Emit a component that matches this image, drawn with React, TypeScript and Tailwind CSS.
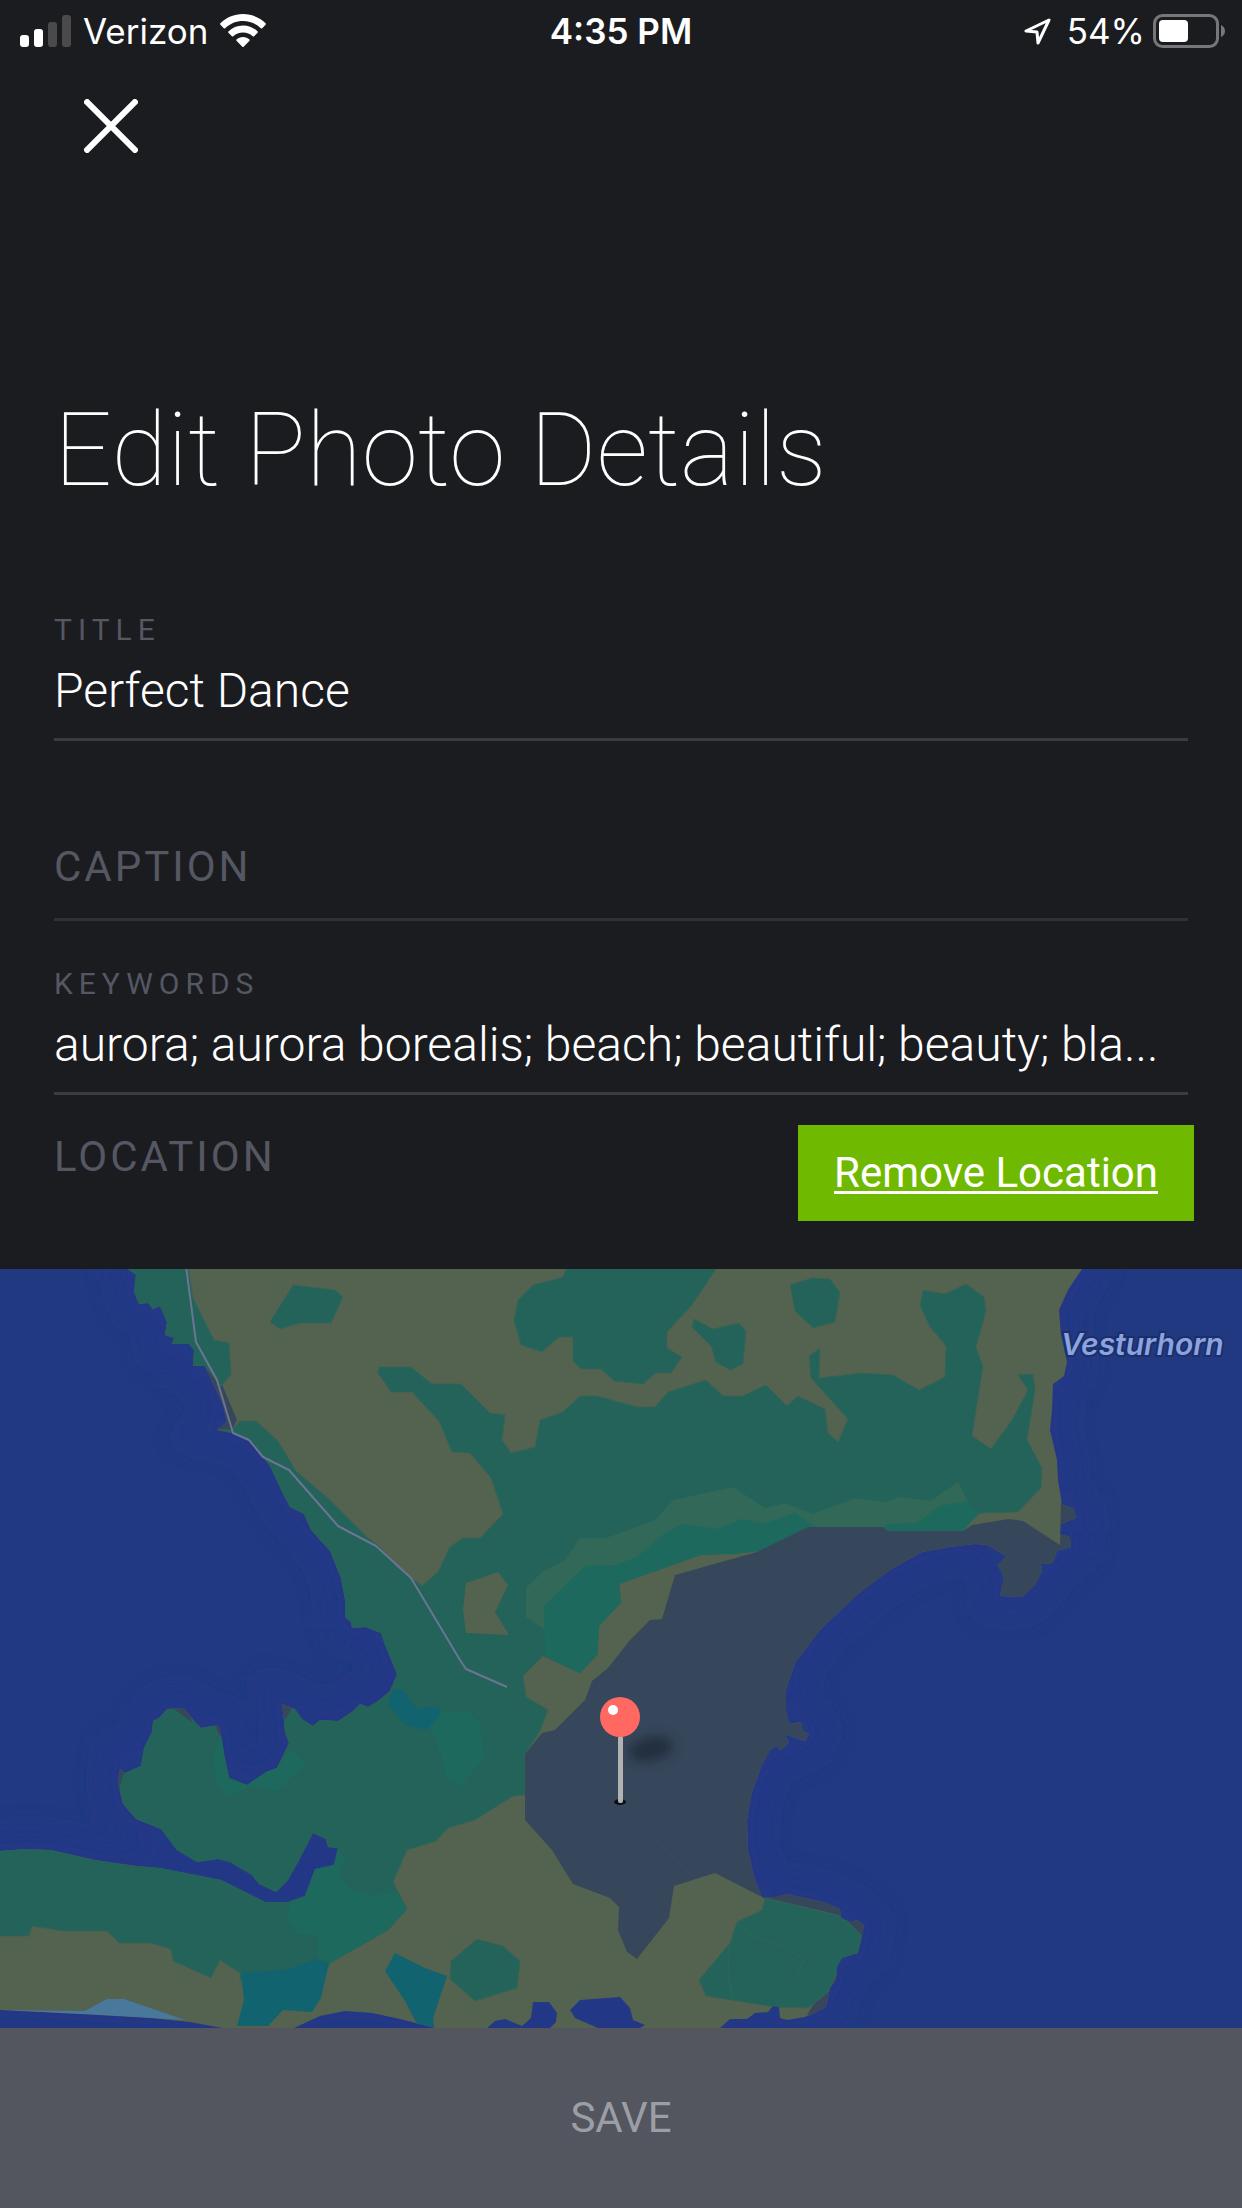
import React from "react";

const LAND =
  "M128 1269L136 1275L134 1292L139 1304L148 1303L153 1309L160 1306L167 1322L165 1335L174 1338L172 1344L189 1344L194 1350L193 1366L205 1366L212 1382L222 1402L227 1422L217 1430L232 1433L249 1440L263 1457L270 1466L283 1494L290 1507L304 1514L311 1530L330 1551L341 1578L345 1600L345 1617L351 1622L352 1628L365 1627L381 1633L385 1645L397 1674L390 1691L378 1701L368 1707L360 1704L352 1712L338 1721L320 1720L313 1726L302 1719L295 1709L282 1704L284 1721L285 1732L289 1743L277 1768L266 1772L247 1785L229 1778L224 1754L221 1734L218 1725L201 1728L195 1722L184 1708L167 1709L159 1718L153 1721L152 1732L144 1748L141 1766L125 1773L120 1769L118 1783L123 1804L136 1819L161 1829L177 1850L197 1862L218 1859L230 1862L252 1875L259 1884L276 1892L288 1880L298 1862L313 1833L326 1839L328 1847L338 1848L334 1865L315 1869L305 1896L288 1902L265 1902L221 1880L160 1868L136 1866L95 1860L51 1850L25 1849L0 1851L-60 1851L-60 2010L0 2010L80 2014L150 2018L190 2022L222 2028L222 2060L294 2060L294 2028L320 2016L345 2011L372 2013L400 2019L435 2028L435 2060L487 2060L487 2028L495 2021L505 2019L522 2026L531 2018L533 2002L549 2002L557 2013L556 2022L550 2028L550 2060L598 2060L598 2028L575 2018L570 2010L580 2000L620 1997L630 2008L633 2020L645 2025L640 2028L640 2060L720 2060L720 2028L730 2019L747 2019L755 2013L768 2012L773 2006L779 2007L780 2018L787 2020L805 2017L815 2013L826 2007L830 1988L836 1980L837 1967L842 1958L858 1953L862 1935L864 1925L857 1920L850 1922L841 1918L840 1909L824 1902L787 1894L776 1897L762 1897L755 1880L748 1850L747 1820L752 1792L762 1765L770 1750L776 1746L781 1750L789 1743L785 1734L795 1738L805 1741L809 1734L803 1731L801 1722L789 1724L786 1710L786 1690L795 1663L820 1630L858 1594L890 1570L922 1552L950 1547L975 1544L987 1545L1006 1556L998 1565L1004 1578L1000 1596L1022 1597L1035 1585L1042 1571L1041 1564L1053 1563L1057 1551L1071 1547L1070 1537L1060 1534L1061 1524L1076 1518L1074 1509L1062 1504L1058 1480L1057 1460L1050 1430L1052 1410L1053 1384L1064 1376L1067 1362L1061 1335L1059 1310L1068 1290L1082 1269L1082 1230L128 1230Z";

const SLIVERS = [
  "205,1366 221,1382 237,1420 230,1434 205,1436",
  "762,1897 787,1885 870,1900 880,2010 807,2015 840,1960",
  "165,1702 186,1700 192,1722 178,1712",
  "212,1720 224,1722 222,1740",
  "278,1700 292,1708 285,1720",
  "112,1765 124,1772 119,1790",
];

const FOREST = [
  "120,1260 187,1260 193,1298 214,1340 229,1343 231,1375 221,1386 205,1366 150,1366",
  "232,1430 240,1421 256,1421 278,1441 296,1471 330,1500 368,1538 380,1547 398,1568 422,1586 438,1572 450,1547 463,1538 480,1538 503,1514 491,1478 470,1453 452,1452 439,1421 412,1392 391,1392 378,1373 379,1367 411,1367 432,1384 461,1384 490,1413 505,1415 502,1440 511,1453 535,1447 540,1420 563,1412 580,1396 597,1396 637,1407 655,1407 668,1392 706,1380 723,1396 743,1396 766,1385 787,1406 798,1396 825,1409 828,1433 838,1442 848,1419 811,1378 809,1356 820,1348 819,1378 862,1373 893,1375 919,1390 945,1377 946,1346 930,1327 920,1305 923,1290 945,1294 966,1284 984,1297 986,1311 976,1347 983,1367 972,1436 991,1449 1012,1420 1028,1390 1018,1375 1033,1374 1035,1390 1027,1440 1042,1468 1041,1488 1018,1512 980,1513 960,1530 808,1527 760,1551 700,1555 619,1584 621,1603 599,1625 597,1655 580,1673 543,1656 523,1676 526,1697 548,1710 539,1733 525,1754 525,1795 513,1796 475,1820 448,1828 436,1841 407,1850 393,1882 407,1909 388,1930 330,1963 322,1980 240,1980 240,1973 220,1960 211,1978 173,1961 171,1949 150,1943 119,1943 107,1931 63,1931 32,1926 29,1936 -60,1936 -60,1430",
  "293,1285 335,1290 343,1297 331,1323 300,1323 280,1329 270,1322",
  "570,1260 563,1277 533,1285 518,1300 514,1320 521,1345 542,1352 559,1337 573,1337 573,1361 581,1369 601,1369 614,1381 643,1384 656,1373 671,1373 682,1357 667,1348 667,1332 692,1305 722,1260",
  "694,1319 713,1329 739,1323 746,1331 743,1364 730,1370 716,1362 711,1346 692,1327",
  "790,1285 812,1278 830,1279 840,1292 835,1322 813,1328 795,1311",
  "765,1898 837,1915 848,1922 861,1935 860,1955 843,1960 828,1992 808,2008 775,2007 706,1996 699,1980 730,1943 737,1922 762,1910",
  "477,1939 503,1946 520,1961 517,1988 475,2001 450,1979 451,1961",
];

const HEATH = [
  "526,1588 542,1572 565,1560 580,1538 606,1538 655,1520 673,1500 733,1487 765,1508 785,1503 813,1514 855,1498 885,1502 900,1497 930,1501 958,1482 968,1501 940,1510 920,1527 815,1527 700,1545 600,1590 544,1629 526,1617",
];

const GROVES = [
  "544,1606 585,1566 615,1565 637,1557 665,1533 683,1524 718,1529 742,1519 763,1524 795,1513 815,1527 805,1530 760,1551 735,1554 700,1555 619,1584 621,1603 599,1626 597,1655 580,1673 545,1656",
  "885,1524 917,1523 940,1506 968,1501 979,1513 963,1531 888,1531",
  "430,1725 441,1712 470,1712 480,1724 484,1758 460,1787 446,1778 442,1758",
  "213,1757 221,1735 229,1778 247,1785 266,1772 277,1768 289,1750 307,1763 278,1791 250,1785 230,1797 216,1783",
  "330,1846 338,1848 346,1860 338,1875 350,1888 370,1896 397,1892 407,1909 388,1930 330,1963 318,1956 318,1935 297,1934 287,1920 290,1902 305,1896 315,1869 334,1865",
];

const SAND = [
  "757,1552 808,1527 883,1527 888,1531 963,1531 972,1525 1009,1519 1023,1521 1060,1545 1061,1500 1090,1500 1090,1610 900,1700 830,1896 762,1897 715,1873 674,1886 669,1918 637,1959 627,1952 618,1930 619,1907 610,1898 573,1884 552,1850 525,1820 525,1754 542,1733 555,1730 585,1700 592,1681 608,1668 630,1640 650,1620 662,1619 675,1575",
];

const LAKES = [
  "241,1973 290,1969 315,1959 329,1963 321,1998 312,2012 283,2010 268,2026 237,2026 244,2000",
  "395,1953 425,1968 447,1976 433,2018 436,2040 418,2026 405,2001 385,1971",
  "388,1705 392,1690 402,1689 417,1709 437,1706 441,1713 427,1730 405,1725",
];

const MEADOWS = ["466,1583 498,1572 508,1585 495,1612 509,1635 466,1633 463,1610"];

function Shapes({ list, className }: { list: string[]; className: string }) {
  return (
    <g className={className} strokeWidth={1}>
      {list.map((points) => (
        <polygon key={points} points={points} />
      ))}
    </g>
  );
}

function LocationMap() {
  return (
    <svg
      className="block min-h-[759px] w-full flex-1 bg-[#213981]"
      viewBox="0 1269 1242 759"
      preserveAspectRatio="xMidYMid slice"
      role="img"
      aria-label="Map of Vesturhorn with a pin"
    >
      <defs>
        <clipPath id="land">
          <path d={LAND} />
        </clipPath>
        <filter id="glow" x="-10%" y="-10%" width="120%" height="120%">
          <feGaussianBlur stdDeviation="12" />
        </filter>
        <filter id="shade" x="-50%" y="-100%" width="200%" height="300%">
          <feGaussianBlur stdDeviation="6" />
        </filter>
      </defs>
      <path d={LAND} className="fill-none stroke-[#213886]" strokeWidth="40" filter="url(#glow)" />
      <path d={LAND} className="fill-[#54634f]" />
      <g clipPath="url(#land)">
        <Shapes list={SLIVERS} className="fill-[#37475b]" />
        <Shapes list={FOREST} className="fill-[#236359] stroke-[#3a6357]" />
        <Shapes list={SLIVERS.slice(2)} className="fill-[#37475b]" />
        <Shapes list={HEATH} className="fill-[#326857]" />
        <Shapes list={GROVES} className="fill-[#1d695e]" />
        <Shapes list={SAND} className="fill-[#37475b]" />
        <Shapes list={LAKES} className="fill-[#11636f]" />
        <Shapes list={MEADOWS} className="fill-[#54634f]" />
        <polygon points="0,2010 85,2011 107,1999 124,1999 185,2020 100,2015" className="fill-[#4a789d]" />
      </g>
      <g className="fill-none stroke-[#3b4c5f]" strokeWidth="1">
        <path d="M553 1734L692 1876" />
        <path d="M738 1923L752 1937L782 1945L804 1960L796 1978L804 1984M730 1943L728 1975L733 2000" className="stroke-[#2c675c]" />
      </g>
      <path
        d="M186 1266L196 1342L217 1380L233 1433L249 1440L263 1457L289 1470L338 1526L376 1546L411 1578L460 1660L466 1669L507 1687"
        className="fill-none stroke-[#6b7593]"
        strokeWidth="2"
        strokeLinejoin="round"
      />
      <text
        x="1061"
        y="1355"
        className="fill-[#8ba4df] stroke-[#1c2f6b] font-['Inter'] text-[30px] font-semibold italic"
        strokeWidth="4"
        paintOrder="stroke"
      >
        Vesturhorn
      </text>
      <ellipse cx="651" cy="1749" rx="23" ry="12" transform="rotate(-12 651 1749)" className="fill-[#222e3c]" filter="url(#shade)" />
      <ellipse cx="620" cy="1802" rx="6" ry="3" className="fill-[#0c1016]" />
      <rect x="618" y="1736" width="5" height="67" rx="2" className="fill-[#b1b3b3]" />
      <circle cx="620" cy="1717" r="20" className="fill-[#ff6961]" />
      <circle cx="613" cy="1710" r="5" className="fill-white" />
    </svg>
  );
}

function StatusBar() {
  return (
    <header className="grid h-[62px] grid-cols-3 items-center px-4 font-['Inter','Liberation_Sans',sans-serif] text-[35px] leading-[62px]">
      <div className="flex items-center gap-3 pl-1">
        <svg width="51" height="32" viewBox="0 0 51 32" aria-label="Signal strength">
          <rect x="0" y="20" width="9" height="12" rx="3" fill="#fff" />
          <rect x="14" y="14" width="9" height="18" rx="3" fill="#fff" />
          <rect x="28" y="7" width="9" height="25" rx="3" fill="#4a4a4c" />
          <rect x="42" y="0" width="9" height="32" rx="3" fill="#4a4a4c" />
        </svg>
        <span>Verizon</span>
        <svg width="46" height="34" viewBox="0 0 46 34" fill="#fff" aria-label="Wi-Fi">
          <path d="M23 0C31.800 0 40 3.600 45.600 9.300Q46.200 10 45.600 10.700L42.200 14.200Q41.500 14.800 40.800 14.200C36 9.600 29.800 7 23 7S10 9.600 5.200 14.200Q4.500 14.800 3.800 14.200L.4 10.700Q-.2 10 .4 9.300C6 3.600 14.200 0 23 0Z" />
          <path d="M23 11.500C28.800 11.500 33.800 13.800 37.600 17.400Q38.200 18 37.600 18.700L34.100 22.200Q33.400 22.800 32.700 22.200C30 19.800 26.800 18.500 23 18.500S16 19.800 13.300 22.200Q12.600 22.800 11.900 22.200L8.400 18.700Q7.800 18 8.400 17.400C12.200 13.800 17.200 11.500 23 11.500Z" />
          <path d="M23 23C25.600 23 27.800 24 29.500 25.600Q30.100 26.200 29.500 26.800L23.700 32.700Q23 33.400 22.300 32.700L16.500 26.800Q15.900 26.200 16.500 25.600C18.200 24 20.400 23 23 23Z" />
        </svg>
      </div>
      <time className="text-center font-semibold">4:35 PM</time>
      <div className="flex items-center justify-end gap-2">
        <svg className="mr-2" width="27" height="27" viewBox="0 0 27 27" fill="none" stroke="#fff" strokeWidth="3" strokeLinejoin="round" aria-label="Location in use">
          <path d="M25 2L2 13L13 14L14 25Z" />
        </svg>
        <span>54%</span>
        <svg width="73" height="34" viewBox="0 0 73 34" aria-label="Battery">
          <rect x="1.500" y="1.500" width="63" height="31" rx="8" fill="none" stroke="#767779" strokeWidth="3" />
          <rect x="6" y="6" width="29" height="22" rx="4" fill="#fff" />
          <path d="M68 11Q72 13 72 17T68 23Z" fill="#767779" />
        </svg>
      </div>
    </header>
  );
}

const smallLabel = "block text-[30px] leading-[36px] tracking-[6px] text-[#555762]";
const valueInput =
  "mt-3 block h-[81px] w-full border-b-3 border-[#3b3c41] bg-transparent pb-[18px] text-[48px] leading-[60px] font-light text-white outline-none";

export default function App() {
  return (
    <main className="flex min-h-screen w-full flex-col bg-[#1b1c20] font-['Roboto','Liberation_Sans',sans-serif] text-white">
      <StatusBar />
      <button type="button" aria-label="Close" className="mt-[37px] ml-[84px] size-[54px]">
        <svg width="54" height="54" viewBox="0 0 54 54" stroke="#fff" strokeWidth="6">
          <path d="M1 1L53 53M53 1L1 53" />
        </svg>
      </button>
      <form className="flex flex-1 flex-col" onSubmit={(e) => e.preventDefault()}>
        <div className="px-[54px] pt-[237px] pb-[48px]">
          <h1 className="text-[102px] leading-[120px] font-thin">Edit Photo Details</h1>
          <div className="mt-[102px]">
            <label htmlFor="title" className={smallLabel}>TITLE</label>
            <input id="title" className={valueInput} defaultValue="Perfect Dance" />
          </div>
          <input
            aria-label="Caption"
            placeholder="CAPTION"
            className="mt-[102px] block h-[78px] w-full border-b-3 border-[#303136] bg-transparent pb-[28px] text-[42px] leading-[48px] tracking-[3px] outline-none placeholder:text-[#555762]"
          />
          <div className="mt-[45px]">
            <label htmlFor="keywords" className={smallLabel}>KEYWORDS</label>
            <input
              id="keywords"
              className={valueInput}
              defaultValue="aurora; aurora borealis; beach; beautiful; beauty; bla..."
            />
          </div>
          <div className="mt-[30px] -mr-[6px] flex items-start justify-between">
            <h2 className="pt-2 text-[42px] leading-[48px] tracking-[3px] text-[#555762]">LOCATION</h2>
            <button
              type="button"
              className="h-[96px] bg-[#6fb900] px-[36px] text-[42px] leading-[48px] underline decoration-3 underline-offset-4"
            >
              Remove Location
            </button>
          </div>
        </div>
        <LocationMap />
        <button type="submit" className="h-[180px] w-full bg-[#53555f] text-[42px] leading-[48px] text-[#9c9ea6]">
          SAVE
        </button>
      </form>
    </main>
  );
}
